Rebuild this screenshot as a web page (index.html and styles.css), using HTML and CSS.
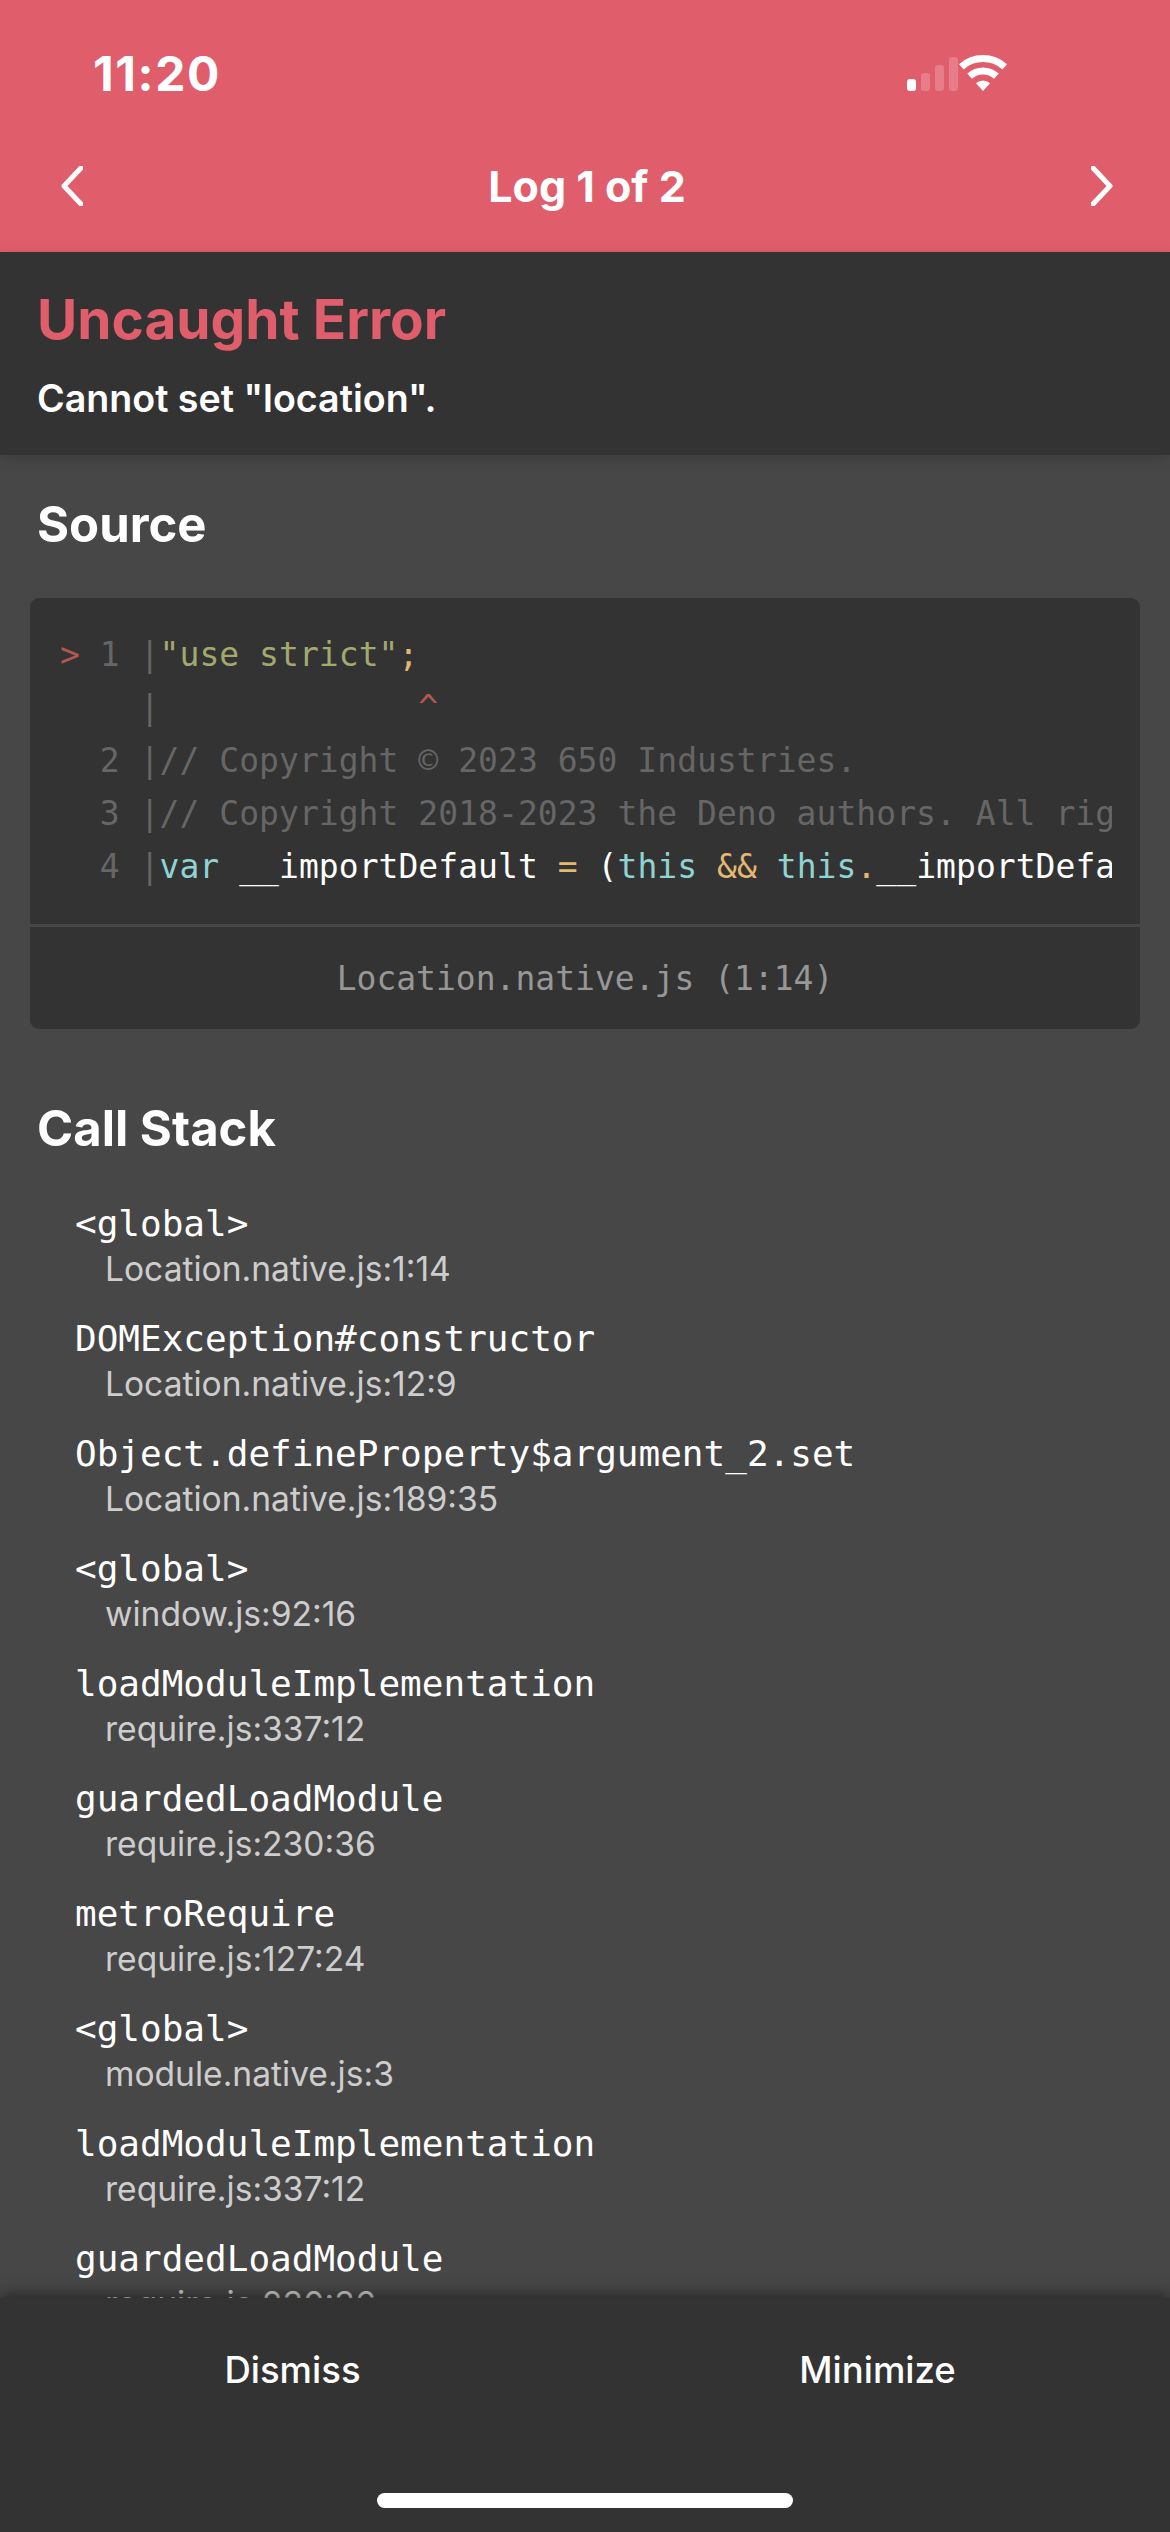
FILE: index.html
```html
<!DOCTYPE html>
<html lang="en">
<head>
<meta charset="utf-8">
<title>Log 1 of 2</title>
<link rel="stylesheet" href="styles.css">
</head>
<body>
<div class="app">
  <header class="header">
    <div class="status">
      <span class="time">11:20</span>
      <div class="status-icons">
        <div class="signal">
          <i class="bar bar1 on"></i><i class="bar bar2"></i><i class="bar bar3"></i><i class="bar bar4"></i>
        </div>
        <svg class="wifi" width="48" height="36" viewBox="0 0 48 36"><path d="M2.3 11.9A32.5 32.5 0 0 1 45.7 11.9M10.6 21.1A20 20 0 0 1 37.4 21.1" fill="none" stroke="#fff" stroke-width="7"/><path d="M24 36L17 28.2A10.5 10.5 0 0 1 31 28.2Z" fill="#fff"/></svg>
      </div>
    </div>
    <nav class="nav">
      <svg class="chev" width="22" height="40" viewBox="0 0 22 40"><path d="M20 2L3 20L20 38" fill="none" stroke="#fff" stroke-width="5" stroke-linecap="round" stroke-linejoin="round"/></svg>
      <span class="nav-title">Log 1 of 2</span>
      <svg class="chev" width="22" height="40" viewBox="0 0 22 40"><path d="M2 2L19 20L2 38" fill="none" stroke="#fff" stroke-width="5" stroke-linecap="round" stroke-linejoin="round"/></svg>
    </nav>
  </header>

  <section class="summary">
    <h1 class="err-title">Uncaught Error</h1>
    <p class="err-msg">Cannot set "location".</p>
  </section>

  <main class="scroll">
    <h2 class="sec-title sec-source">Source</h2>
    <div class="codebox">
      <div class="code">
        <div class="ln"><span class="red">&gt;</span><span class="gut"> 1 |</span><span class="str">"use strict"</span><span class="op">;</span></div>
        <div class="ln"><span class="gut">    |</span>             <span class="red">^</span></div>
        <div class="ln"><span class="gut">  2 |</span><span class="cmt">// Copyright © 2023 650 Industries.</span></div>
        <div class="ln"><span class="gut">  3 |</span><span class="cmt">// Copyright 2018-2023 the Deno authors. All rights reserved.</span></div>
        <div class="ln"><span class="gut">  4 |</span><span class="kw">var</span> __importDefault <span class="op">=</span> (<span class="kw">this</span> <span class="op">&amp;&amp;</span> <span class="kw">this</span><span class="op">.</span>__importDefault) || function (mod) {</div>
      </div>
      <div class="code-file">Location.native.js (1:14)</div>
    </div>

    <h2 class="sec-title sec-stack">Call Stack</h2>
    <ul class="frames">
      <li class="frame"><span class="fn">&lt;global&gt;</span><span class="loc">Location.native.js:1:14</span></li>
      <li class="frame"><span class="fn">DOMException#constructor</span><span class="loc">Location.native.js:12:9</span></li>
      <li class="frame"><span class="fn">Object.defineProperty$argument_2.set</span><span class="loc">Location.native.js:189:35</span></li>
      <li class="frame"><span class="fn">&lt;global&gt;</span><span class="loc">window.js:92:16</span></li>
      <li class="frame"><span class="fn">loadModuleImplementation</span><span class="loc">require.js:337:12</span></li>
      <li class="frame"><span class="fn">guardedLoadModule</span><span class="loc">require.js:230:36</span></li>
      <li class="frame"><span class="fn">metroRequire</span><span class="loc">require.js:127:24</span></li>
      <li class="frame"><span class="fn">&lt;global&gt;</span><span class="loc">module.native.js:3</span></li>
      <li class="frame"><span class="fn">loadModuleImplementation</span><span class="loc">require.js:337:12</span></li>
      <li class="frame"><span class="fn">guardedLoadModule</span><span class="loc">require.js:230:36</span></li>
    </ul>
  </main>

  <footer class="footer">
    <div class="actions">
      <button class="btn">Dismiss</button>
      <button class="btn">Minimize</button>
    </div>
    <div class="home"></div>
  </footer>
</div>
</body>
</html>
```
FILE: styles.css
```css
* { box-sizing: border-box; }
html, body { margin: 0; padding: 0; }
body { background: #333; font-family: Inter, "Liberation Sans", sans-serif; color: #fff; }
.app { width: 1170px; height: 2532px; display: flex; flex-direction: column; overflow: hidden; }

.header { height: 252px; background: #e05d6b; flex: none; display: flex; flex-direction: column; }
.status { height: 148px; padding: 0 163px 0 93px; display: flex; justify-content: space-between; align-items: flex-end; }
.time { font-size: 48px; font-weight: 700; line-height: 54px; letter-spacing: 1.6px; margin-bottom: 47px; }
.status-icons { display: flex; align-items: flex-end; margin-bottom: 57px; }
.signal { display: flex; align-items: flex-end; gap: 5px; margin-right: 1px; }
.bar { display: block; width: 9px; border-radius: 3px; background: rgba(255,255,255,.2); }
.bar.on { background: #fff; }
.bar1 { height: 12px; } .bar2 { height: 18px; } .bar3 { height: 26px; } .bar4 { height: 34px; }
.wifi { display: block; }
.nav { height: 104px; padding: 0 57px 26px 61px; display: flex; justify-content: space-between; align-items: center; margin-top: -1px; }
.nav-title { font-size: 43px; font-weight: 700; line-height: 50px; }
.chev { display: block; }

.summary { height: 203px; background: #333; flex: none; padding: 34px 37px 0; position: relative; z-index: 2; box-shadow: 0 4px 14px rgba(0,0,0,.16); }
.err-title { margin: 0; font-size: 55px; font-weight: 700; line-height: 66px; color: #e05d6b; }
.err-msg { margin: 25px 0 0; font-size: 37.6px; font-weight: 600; line-height: 44px; }

.scroll { flex: 1; min-height: 0; overflow: hidden; background: #474747; }
.sec-title { margin: 0; padding: 0 37px; font-size: 49px; font-weight: 700; line-height: 56px; }
.sec-source { padding-top: 42px; }
.sec-stack { padding-top: 72px; }

.codebox { margin: 45px 30px 0; background: #333; border-radius: 9px; overflow: hidden; }
.code { padding: 30px 28px 31px 30px; font-family: "DejaVu Sans Mono", "Liberation Mono", monospace; font-size: 33px; letter-spacing: .04px; line-height: 53px; overflow: hidden; height: 326px; }
.ln { height: 53px; overflow: hidden; white-space: pre; }
.red { color: #b5574f; }
.gut { color: #666; }
.str { color: #a3a86f; }
.op { color: #e3b871; }
.cmt { color: #666; }
.kw { color: #90d3d3; }
.code-file { height: 105px; border-top: 3px solid #474747; display: flex; align-items: center; justify-content: center; font-family: "DejaVu Sans Mono", "Liberation Mono", monospace; font-size: 33px; color: #979797; }

.frames { list-style: none; margin: 0; padding: 44px 0 0 75px; }
.frame { height: 115px; display: flex; flex-direction: column; }
.fn { font-family: "DejaVu Sans Mono", "Liberation Mono", monospace; font-size: 36px; line-height: 46px; white-space: pre; }
.loc { font-size: 33.6px; line-height: 44px; color: #cdcdcd; padding-left: 30px; }

.footer { height: 234px; background: #333; flex: none; position: relative; z-index: 2; box-shadow: 0 -3px 14px rgba(0,0,0,.5); }
.actions { display: flex; height: 144px; }
.btn { flex: 1; background: none; border: 0; padding: 0; color: #fff; font-family: Inter, "Liberation Sans", sans-serif; font-size: 36.5px; font-weight: 500; }
.home { width: 416px; height: 15px; margin: 51px auto 0; background: #fff; border-radius: 8px; }
```
